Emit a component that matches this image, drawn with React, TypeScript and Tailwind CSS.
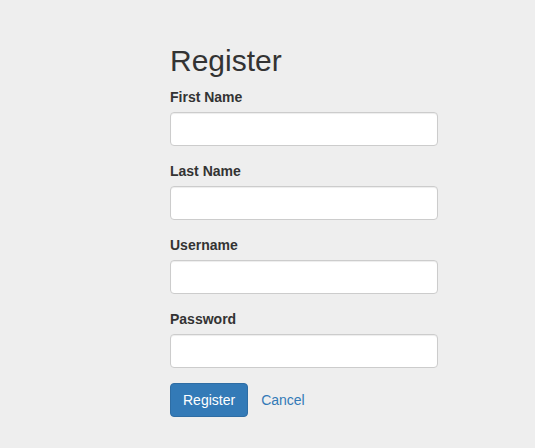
const fields = ["First Name", "Last Name", "Username", "Password"];

export default function App() {
  return (
    <div className="min-h-screen bg-[#eeeeee] font-['Liberation_Sans',Arial,sans-serif] text-[14px] text-[#333333]">
      <div className="ml-[170px] w-[268px] pt-[44px]">
        <h2 className="mb-[10px] text-[30px] leading-[33px] font-normal">Register</h2>
        <form>
          {fields.map((f) => (
            <div key={f} className="mb-[15px]">
              <label className="mb-[5px] block font-bold leading-[20px]">{f}</label>
              <input
                type={f === "Password" ? "password" : "text"}
                className="block h-[34px] w-full rounded-[4px] border border-[#cccccc] bg-white px-3 shadow-[inset_0_1px_1px_rgba(0,0,0,0.075)] outline-none"
              />
            </div>
          ))}
          <div className="flex items-center gap-[13px]">
            <button
              type="button"
              className="h-[34px] rounded-[4px] border border-[#2e6da4] bg-[#337ab7] px-3 leading-[20px] text-white"
            >
              Register
            </button>
            <a href="#" className="leading-[20px] text-[#337ab7]">
              Cancel
            </a>
          </div>
        </form>
      </div>
    </div>
  );
}
